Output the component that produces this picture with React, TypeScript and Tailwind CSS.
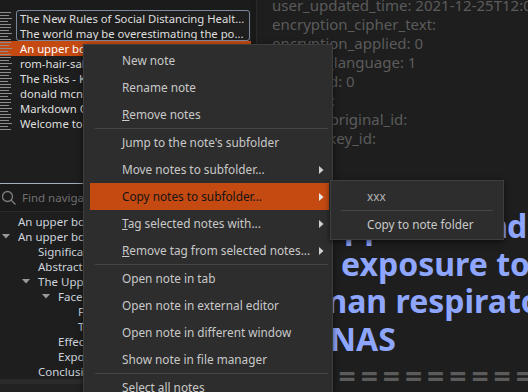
import React from "react"

const notes = [
  "The New Rules of Social Distancing Healt...",
  "The world may be overestimating the po...",
  "An upper bound on one-to-one exposure...",
  "rom-hair-salon-covid-19-outbreak",
  "The Risks - Know Them - Avoid Them",
  "donald mcneil covid interview",
  "Markdown Cheatsheet",
  "Welcome to QOwnNotes",
]

const tree: { text: string; level: number; open?: boolean }[] = [
  { text: "An upper bound on one-to-one exposure", level: 0 },
  { text: "An upper bound on one-to-one exposure", level: 0, open: true },
  { text: "Significance", level: 1 },
  { text: "Abstract", level: 1 },
  { text: "The Upper Bound Model", level: 1, open: true },
  { text: "Face Masks", level: 2, open: true },
  { text: "Fit Factor", level: 3 },
  { text: "Total Inward Leakage", level: 3 },
  { text: "Effect of Distance", level: 2 },
  { text: "Exposure Time", level: 2 },
  { text: "Conclusions", level: 1 },
]

const meta = [
  "user_updated_time: 2021-12-25T12:00:00.000Z",
  "encryption_cipher_text:",
  "encryption_applied: 0",
  "markup_language: 1",
  "is_shared: 0",
  "share_id:",
  "conflict_original_id:",
  "master_key_id:",
  "type_: 1",
]

function NoteIcon() {
  return (
    <svg width="14" height="15" viewBox="0 0 14 15" className="shrink-0">
      <g stroke="#8c8c8c" strokeWidth="1">
        <line x1="0" y1="1.5" x2="11" y2="1.5" />
        <line x1="0" y1="4.5" x2="9" y2="4.5" />
        <line x1="0" y1="7.5" x2="12" y2="7.5" />
        <line x1="0" y1="10.5" x2="8" y2="10.5" />
        <line x1="0" y1="13.5" x2="11" y2="13.5" />
      </g>
    </svg>
  )
}

function Arrow() {
  return (
    <svg width="8" height="5" viewBox="0 0 8 5">
      <polygon points="0,0 8,0 4,4.5" fill="#9a9a9a" />
    </svg>
  )
}

function SubArrow({ dark }: { dark?: boolean }) {
  return (
    <svg width="5" height="8" viewBox="0 0 5 8">
      <polygon points="0,0 4.5,4 0,8" fill={dark ? "#e8e8e8" : "#d0d0d0"} />
    </svg>
  )
}

function MenuItem({
  children,
  sub,
  active,
}: {
  children: React.ReactNode
  sub?: boolean
  active?: boolean
}) {
  return (
    <div
      className={`h-[27px] ml-[6px] mr-[3px] pl-[32px] pr-[5px] flex items-center justify-between ${
        active ? "bg-[#c44a12] text-[#141414]" : "text-[#c9c9c9]"
      }`}
    >
      <span>{children}</span>
      {sub && <SubArrow dark={active} />}
    </div>
  )
}

function Sep() {
  return <div className="h-px ml-[11px] mr-[4px] bg-[#454545]" />
}

export default function App() {
  return (
    <div
      className="relative w-[528px] h-[392px] overflow-hidden flex bg-[#1e1e1e]"
      style={{ fontFamily: '"Noto Sans", sans-serif' }}
    >
      {/* left side: notes + navigation */}
      <div className="w-[251px] shrink-0 flex flex-col bg-[#1e1e1e]">
        <div className="h-[11px] bg-[#1b1b1b]" />
        <div className="h-[167px] text-[11.3px] text-[#dedede]">
          <div className="relative">
            <div className="absolute left-[16px] right-[1px] top-[-1px] bottom-0 border border-[#7b889c] rounded-[3px]" />
            {notes.slice(0, 2).map((n) => (
              <div key={n} className="h-[15px] flex items-center">
                <NoteIcon />
                <span className="ml-[6px] whitespace-nowrap leading-none">{n}</span>
              </div>
            ))}
          </div>
          {notes.slice(2).map((n, i) => (
            <div
              key={n}
              className={`h-[15px] flex items-center ${i === 0 ? "bg-[#c44a12] text-white" : ""}`}
            >
              <NoteIcon />
              <span className="ml-[6px] whitespace-nowrap leading-none">{n}</span>
            </div>
          ))}
        </div>
        <div className="h-[5px] bg-[#1e1e1e]" />
        <div className="h-[29px] flex items-center gap-[5px] pl-[1px] bg-[#1a1a1a] border-t border-[#a3adbd] border-b border-b-[#2c2c2c]">
          <svg width="16" height="16" viewBox="0 0 16 16" fill="none" stroke="#7d7d7d" strokeWidth="1.3">
            <circle cx="6.5" cy="6.5" r="5" />
            <line x1="10.2" y1="10.2" x2="14.5" y2="14.5" />
          </svg>
          <span className="text-[11.5px] text-[#6f6f6f]">Find navigation item</span>
        </div>
        <div className="flex-1 pt-[2px] text-[11.5px] text-[#cdd3dc]">
          {tree.map((t, i) => (
            <div key={i} className="h-[15px] flex items-center whitespace-nowrap" style={{ paddingLeft: t.level * 20 }}>
              <div className="w-[18px] shrink-0 flex justify-start pl-[2px]">{t.open && <Arrow />}</div>
              <span className="leading-none">{t.text}</span>
            </div>
          ))}
        </div>
        <div className="h-[5px] bg-[#2b2b2b]" />
        <div className="h-[8px] bg-[#222222]" />
      </div>

      {/* splitter */}
      <div className="w-[6px] shrink-0 bg-[#191919] border-r border-[#2a2a2a]" />

      {/* editor */}
      <div className="flex-1 overflow-hidden pl-[15px] -mt-[4px]">
        <div className="text-[15px] leading-[19px] text-[#5b5b5b] whitespace-nowrap">
          {meta.map((m) => (
            <div key={m}>{m}</div>
          ))}
        </div>
        <div className="mt-[40px] text-[32px] leading-[37.5px] font-bold text-[#8fa6ff] whitespace-nowrap">
          <div>
            <span className="inline-block w-[235px]">An upper boun</span>d on one-to-one
          </div>
          <div>
            <span className="inline-block w-[69px]">one</span>exposure to infectious
          </div>
          <div>
            <span className="inline-block w-[44px]">hu</span>man respiratory particles
          </div>
          <div>
            <span className="inline-block w-[58px]">| P</span>NAS
          </div>
          <div className="text-[#5b5b5b] text-[30px] tracking-[5px]">=================</div>
        </div>
      </div>

      {/* context menu */}
      <div className="absolute left-[83px] top-[44px] w-[250px] h-[360px] pt-[2px] bg-[#2d2d2d] border border-[#3e3e3e] shadow-[0_2px_6px_rgba(0,0,0,0.6)] text-[11.8px]">
        <MenuItem>New note</MenuItem>
        <MenuItem>Rename note</MenuItem>
        <MenuItem>
          <span className="underline">R</span>emove notes
        </MenuItem>
        <Sep />
        <MenuItem>Jump to the note's subfolder</MenuItem>
        <MenuItem sub>Move notes to subfolder...</MenuItem>
        <MenuItem sub active>
          Copy notes to subfolder...
        </MenuItem>
        <MenuItem sub>
          <span className="underline">T</span>ag selected notes with...
        </MenuItem>
        <MenuItem sub>
          <span className="underline">R</span>emove tag from selected notes...
        </MenuItem>
        <Sep />
        <MenuItem>Open note in tab</MenuItem>
        <MenuItem>Open note in external editor</MenuItem>
        <MenuItem>Open note in different window</MenuItem>
        <MenuItem>Show note in file manager</MenuItem>
        <Sep />
        <MenuItem>Select all notes</MenuItem>
      </div>

      {/* submenu */}
      <div className="absolute left-[330px] top-[180px] w-[174px] pt-[2px] pb-[1px] bg-[#2d2d2d] border border-[#3e3e3e] shadow-[0_2px_6px_rgba(0,0,0,0.6)] text-[11.8px]">
        <div className="h-[27px] pl-[36px] flex items-center text-[#b4b4b4]">xxx</div>
        <div className="h-px mx-[10px] bg-[#454545]" />
        <div className="h-[27px] pl-[36px] flex items-center text-[#c9c9c9]">Copy to note folder</div>
      </div>
    </div>
  )
}
